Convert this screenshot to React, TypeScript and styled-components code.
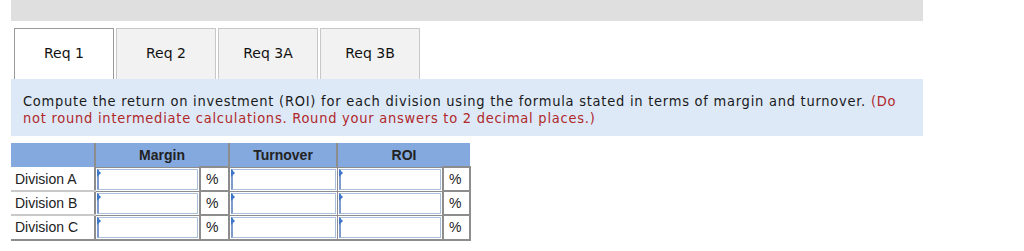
import React from 'react';
import styled, { createGlobalStyle } from 'styled-components';

const GlobalStyle = createGlobalStyle`
  body {
    margin: 0;
    background: #fff;
    font-family: "DejaVu Sans", Verdana, sans-serif;
  }
`;

const Page = styled.div`
  width: 912px;
  padding-left: 11px;
`;

const TopBar = styled.div`
  height: 21px;
  background: #dfdfdf;
`;

const Tabs = styled.div`
  display: flex;
  gap: 2px;
  padding: 7px 0 0 3px;
  height: 51px;
`;

const Tab = styled.div<{ $active?: boolean }>`
  width: 100px;
  box-sizing: border-box;
  display: flex;
  align-items: center;
  justify-content: center;
  padding-bottom: 2px;
  font-size: 14px;
  color: #111;
  background: ${(p) => (p.$active ? '#fff' : '#f2f2f2')};
  border: 1px solid ${(p) => (p.$active ? '#9a9a9a' : '#c8c8c8')};
  border-bottom: none;
`;

const Instructions = styled.div`
  background: #dde9f7;
  height: 57px;
  box-sizing: border-box;
  padding: 14px 10px 0 12px;
  font-family: "DejaVu Sans Condensed", "DejaVu Sans", sans-serif;
  font-size: 14.5px;
  letter-spacing: 0.75px;
  line-height: 17px;
  color: #1a1a1a;
`;

const Note = styled.span`
  color: #b0282a;
`;

const Grid = styled.table`
  margin-top: 7px;
  border-collapse: collapse;
  table-layout: fixed;
  width: 459px;
  font-family: "Liberation Sans", Arial, sans-serif;
  font-size: 14px;
  color: #222;
`;

const Head = styled.th`
  height: 23px;
  padding: 0;
  background: #84a9de;
  font-weight: bold;
  color: #222;
  border-left: 2px solid #8d8d8d;
  &:first-child {
    border-left: none;
  }
`;

const Label = styled.td`
  height: 22px;
  padding: 0 0 0 4px;
  text-align: left;
  white-space: nowrap;
  border-bottom: 2px solid #c9c9c9;
  border-right: 2px solid #8d8d8d;
`;

const InputCell = styled.td`
  padding: 0;
  border: 1px solid #8d8d8d;
  position: relative;
`;

const Field = styled.div`
  height: 21px;
  box-sizing: border-box;
  border: 1px solid #a9bfdc;
  border-left: 2px solid #7f9ccc;
  background: #fff;
  margin: 1px;
`;

const Flag = styled.span`
  position: absolute;
  left: 1px;
  top: 1px;
  width: 0;
  height: 0;
  border-top: 4px solid transparent;
  border-bottom: 4px solid transparent;
  border-left: 4px solid #3f77c8;
`;

const Pct = styled.td`
  padding: 0 0 0 5px;
  background: #fff;
  border: 2px solid #8d8d8d;
  text-align: left;
`;

const LastRow = styled.tr`
  td {
    border-bottom: 2px solid #8d8d8d;
  }
`;

const Footer = styled.div`
  display: flex;
  gap: 22px;
  padding: 10px 0 0 261px;
`;

const FootButton = styled.div<{ $dark?: boolean }>`
  width: 176px;
  height: 10px;
  border-radius: 3px 3px 0 0;
  background: ${(p) => (p.$dark ? '#3a6fb8' : '#e4edf8')};
`;

const Input: React.FC = () => (
  <InputCell>
    <Flag />
    <Field />
  </InputCell>
);

const rows = ['Division A', 'Division B', 'Division C'];

export default function App() {
  return (
    <Page>
      <GlobalStyle />
      <TopBar />
      <Tabs>
        <Tab $active>Req 1</Tab>
        <Tab>Req 2</Tab>
        <Tab>Req 3A</Tab>
        <Tab>Req 3B</Tab>
      </Tabs>
      <Instructions>
        Compute the return on investment (ROI) for each division using the formula stated in terms of margin and
        turnover. <Note>(Do not round intermediate calculations. Round your answers to 2 decimal places.)</Note>
      </Instructions>
      <Grid>
        <colgroup>
          <col style={{ width: 84 }} />
          <col style={{ width: 105 }} />
          <col style={{ width: 29 }} />
          <col style={{ width: 108 }} />
          <col style={{ width: 106 }} />
          <col style={{ width: 27 }} />
        </colgroup>
        <thead>
          <tr>
            <Head />
            <Head colSpan={2}>Margin</Head>
            <Head>Turnover</Head>
            <Head colSpan={2}>ROI</Head>
          </tr>
        </thead>
        <tbody>
          {rows.map((r, i) => {
            const cells = (
              <>
                <Label>{r}</Label>
                <Input />
                <Pct>%</Pct>
                <Input />
                <Input />
                <Pct>%</Pct>
              </>
            );
            return i === rows.length - 1 ? <LastRow key={r}>{cells}</LastRow> : <tr key={r}>{cells}</tr>;
          })}
        </tbody>
      </Grid>
      <Footer>
        <FootButton />
        <FootButton $dark />
      </Footer>
    </Page>
  );
}
